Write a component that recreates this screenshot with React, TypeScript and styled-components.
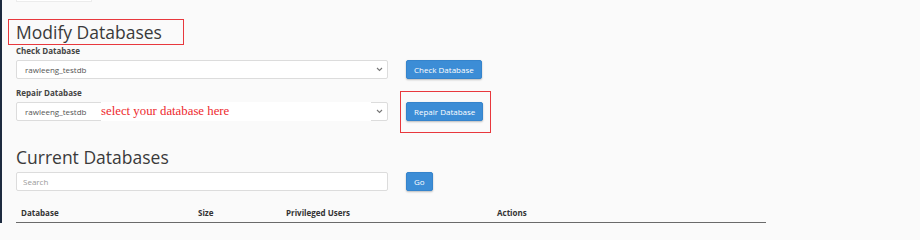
import React from 'react';
import styled, { createGlobalStyle } from 'styled-components';

const GlobalStyle = createGlobalStyle`
  html, body {
    margin: 0;
    padding: 0;
    background: #fafafa;
  }
  body {
    font-family: "Open Sans", "Liberation Sans", sans-serif;
    color: #333;
  }
`;

const Chevron: React.FC = () => (
  <ChevronIcon width="7" height="5" viewBox="0 0 7 5">
    <path d="M1 1 L3.5 3.5 L6 1" fill="none" stroke="#777" strokeWidth="1.1" />
  </ChevronIcon>
);

const App: React.FC = () => {
  return (
    <>
      <GlobalStyle />
      <Page>
        <TopStub />

        <TitleMark>
          <SectionTitle>Modify Databases</SectionTitle>
        </TitleMark>

        <FieldLabel>Check Database</FieldLabel>
        <FormRow>
          <SelectBox>
            <SelectValue>rawleeng_testdb</SelectValue>
            <Chevron />
          </SelectBox>
          <ActionButton>Check Database</ActionButton>
        </FormRow>

        <FieldLabel>Repair Database</FieldLabel>
        <FormRow>
          <SelectBox>
            <SelectValue>rawleeng_testdb</SelectValue>
            <HintNote>select your database here</HintNote>
            <Chevron />
          </SelectBox>
          <ButtonMark>
            <ActionButton>Repair Database</ActionButton>
          </ButtonMark>
        </FormRow>

        <SectionTitle $spaced>Current Databases</SectionTitle>
        <FormRow>
          <SearchInput placeholder="Search" />
          <ActionButton>Go</ActionButton>
        </FormRow>

        <TableHead>
          <HeadCell>Database</HeadCell>
          <HeadCell>Size</HeadCell>
          <HeadCell>Privileged Users</HeadCell>
          <HeadCell>Actions</HeadCell>
        </TableHead>
      </Page>
    </>
  );
};

export default App;

const Page = styled.div`
  height: 223px;
  box-sizing: border-box;
  border-left: 2px solid #1d2a3f;
  padding-left: 14px;
  overflow: hidden;
`;

const TopStub = styled.div`
  width: 74px;
  height: 1px;
  background: #fff;
  border: 1px solid #ececec;
  border-top: none;
  margin-bottom: 17px;
`;

const TitleMark = styled.div`
  display: inline-block;
  border: 1.5px solid #e8383d;
  margin-left: -8px;
  padding: 0 21px 0 7px;
  height: 24px;
`;

const SectionTitle = styled.h2<{ $spaced?: boolean }>`
  margin: ${p => (p.$spaced ? '24px 0 3px' : '0')};
  font-size: 17.5px;
  font-weight: 400;
  line-height: 24px;
  color: #3a3a3a;
  height: 24px;
`;

const FieldLabel = styled.div`
  font-size: 8px;
  font-weight: 700;
  color: #444;
  line-height: 12px;
  margin: 0 0 3px;
`;

const FormRow = styled.div`
  display: flex;
  align-items: center;
  gap: 18px;
  margin-bottom: 8px;
`;

const SelectBox = styled.div`
  width: 372px;
  height: 19px;
  box-sizing: border-box;
  background: #fff;
  border: 1px solid #dcdcdc;
  border-radius: 2px;
  display: flex;
  align-items: center;
  padding: 0 4px 0 8px;
`;

const SelectValue = styled.span`
  flex: none;
  width: 76px;
  font-size: 8px;
  color: #555;
  white-space: nowrap;
`;

const HintNote = styled.span`
  flex: none;
  align-self: stretch;
  width: 270px;
  margin: -1px 0;
  background: #fff;
  font-family: "Liberation Serif", "DejaVu Serif", serif;
  font-size: 12.8px;
  line-height: 18px;
  color: #ee2a2f;
  white-space: nowrap;
`;

const ChevronIcon = styled.svg`
  flex: none;
  margin-left: auto;
`;

const ActionButton = styled.button`
  height: 19px;
  box-sizing: border-box;
  padding: 0 7px;
  border: 1px solid #3584cc;
  border-radius: 2px;
  background: #3c8dd6;
  color: #fff;
  font-family: "Open Sans", "Liberation Sans", sans-serif;
  font-size: 8px;
  box-shadow: 0 1px 2px rgba(0, 0, 0, 0.25);
  cursor: pointer;
`;

const ButtonMark = styled.div`
  display: flex;
  border: 1.5px solid #e8383d;
  padding: 10px 7px 11px 5px;
  margin: -12px -9px -13px -6px;
`;

const SearchInput = styled.input`
  width: 372px;
  height: 19px;
  box-sizing: border-box;
  background: #fff;
  border: 1px solid #dcdcdc;
  border-radius: 2px;
  padding: 0 6px;
  font-family: "Open Sans", "Liberation Sans", sans-serif;
  font-size: 8px;
  color: #555;
  outline: none;
  &::placeholder {
    color: #9a9a9a;
  }
`;

const TableHead = styled.div`
  display: grid;
  grid-template-columns: 177px 88px 211px 1fr;
  width: 750px;
  border-bottom: 2px solid #6a6a6a;
  margin-top: 11px;
`;

const HeadCell = styled.div`
  font-size: 8px;
  font-weight: 700;
  color: #333;
  padding: 5px 5px 3px;
  line-height: 12px;
`;
